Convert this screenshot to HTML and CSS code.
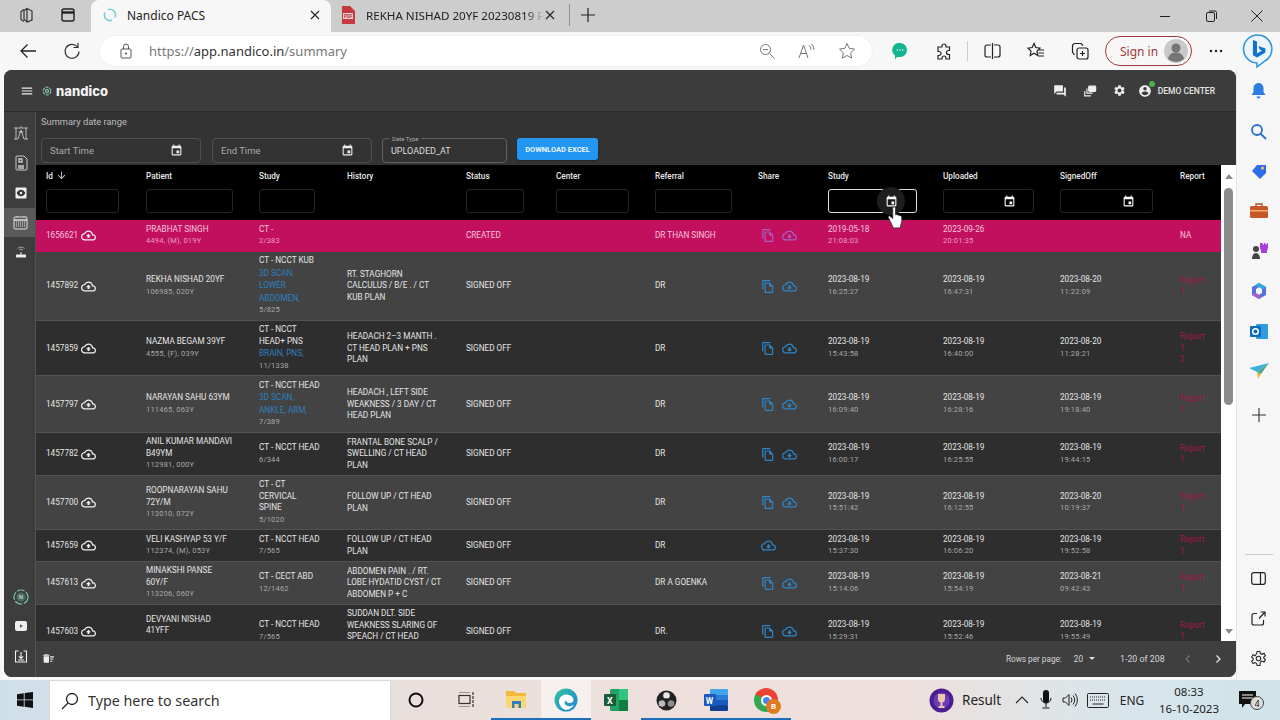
FILE: index.html
```html
<!DOCTYPE html>
<html lang="en">
<head>
    <meta charset="UTF-8">
    <meta name="viewport" content="width=device-width, initial-scale=1.0">
    <title>Nandico PACS</title>
    <link rel="stylesheet" href="styles.css">
</head>
<body>
    <svg class="sprite" aria-hidden="true">
        <symbol id="i-event" viewBox="0 0 24 24"><path d="M17 12h-5v5h5v-5zM16 1v2H8V1H6v2H5c-1.11 0-1.99.9-1.99 2L3 19c0 1.1.89 2 2 2h14c1.1 0 2-.9 2-2V5c0-1.1-.9-2-2-2h-1V1h-2zm3 18H5V8h14v11z"/></symbol>
        <symbol id="i-up" viewBox="0 0 24 24"><path d="M19.35 10.04C18.67 6.59 15.64 4 12 4 9.11 4 6.6 5.64 5.35 8.04 2.34 8.36 0 10.91 0 14c0 3.31 2.69 6 6 6h13c2.76 0 5-2.24 5-5 0-2.64-2.05-4.78-4.65-4.96zM19 18H6c-2.21 0-4-1.79-4-4 0-2.05 1.53-3.76 3.56-3.97l1.07-.11.5-.95C8.08 7.14 9.94 6 12 6c2.62 0 4.88 1.86 5.39 4.43l.3 1.5 1.53.11c1.56.1 2.78 1.41 2.78 2.96 0 1.65-1.35 3-3 3zM8 13h2.55v3h2.9v-3H16l-4-4z"/></symbol>
        <symbol id="i-down" viewBox="0 0 24 24"><path d="M19.35 10.04C18.67 6.59 15.64 4 12 4 9.11 4 6.6 5.64 5.35 8.04 2.34 8.36 0 10.91 0 14c0 3.31 2.69 6 6 6h13c2.76 0 5-2.24 5-5 0-2.64-2.05-4.78-4.65-4.96zM19 18H6c-2.21 0-4-1.79-4-4 0-2.05 1.53-3.76 3.56-3.97l1.07-.11.5-.95C8.08 7.14 9.94 6 12 6c2.62 0 4.88 1.86 5.39 4.43l.3 1.5 1.53.11c1.56.1 2.78 1.41 2.78 2.96 0 1.65-1.35 3-3 3zM13.45 10h-2.9v3H8l4 4 4-4h-2.55z"/></symbol>
        <symbol id="i-copy" viewBox="0 0 24 24"><path d="M16 1H4c-1.1 0-2 .9-2 2v14h2V3h12V1zm-1 4H8c-1.1 0-1.99.9-1.99 2L6 21c0 1.1.89 2 1.99 2H19c1.1 0 2-.9 2-2V11l-6-6zM8 21V7h6v5h5v9H8z"/></symbol>
        <symbol id="i-x" viewBox="0 0 12 12"><path d="M2 2l8 8M10 2l-8 8" fill="none" stroke="currentColor" stroke-width="1.1"/></symbol>
    </svg>

    <div class="tabstrip">
        <div class="strip-btn">
            <svg width="18" height="18" viewBox="0 0 18 18" fill="none" stroke="#333" stroke-width="1.2"><path d="M7 3.5l-3 2v8l3 2M10 2.5l-3 2v9l3 2M10 2.5l5 2.5v9l-5 2z"/></svg>
        </div>
        <div class="strip-btn">
            <svg width="16" height="16" viewBox="0 0 16 16" fill="none" stroke="#222" stroke-width="1.4"><rect x="2" y="2" width="12" height="12" rx="2"/><path d="M2 5.5h12" stroke-width="2.4"/></svg>
        </div>
        <div class="tab tab-active">
            <svg class="tab-icon" width="14" height="16" viewBox="0 0 14 16" fill="none" stroke="#6fd3cf" stroke-width="1.6"><path d="M12 5.5A5.500 5.500 0 0 0 5 2.800M2 10.500a5.500 5.500 0 0 0 7 2.700M2 5.500a6 6 0 0 0 0 5M12 5.500a6 6 0 0 1 0 5"/></svg>
            <span class="tab-title">Nandico PACS</span>
            <svg class="tab-close" width="12" height="12"><use href="#i-x"/></svg>
        </div>
        <div class="tab">
            <svg class="tab-icon" width="16" height="18" viewBox="0 0 16 18"><path d="M2 0h8l5 5v13H2z" fill="#c8383f"/><rect x="3" y="7" width="10" height="6" fill="#f3d7d7"/><text x="4" y="12" font-size="4.6" font-family="Roboto" font-weight="700" fill="#b8272e">PDF</text></svg>
            <span class="tab-title tab-fade">REKHA NISHAD 20YF 20230819 F</span>
            <svg class="tab-close" width="12" height="12"><use href="#i-x"/></svg>
        </div>
        <div class="strip-add">
            <svg width="16" height="16" viewBox="0 0 16 16" stroke="#222" stroke-width="1.2"><path d="M8 1v14M1 8h14"/></svg>
        </div>
        <div class="window-controls">
            <div class="win-btn"><svg width="12" height="12" viewBox="0 0 12 12" stroke="#222"><path d="M1 6.500h10"/></svg></div>
            <div class="win-btn"><svg width="12" height="12" viewBox="0 0 12 12" fill="none" stroke="#222"><rect x="1.500" y="2.500" width="8" height="9" rx="1.500"/><path d="M4 1h6a1.500 1.500 0 0 1 1.500 1.500V9"/></svg></div>
            <div class="win-btn"><svg width="14" height="14" viewBox="0 0 14 14" stroke="#222"><path d="M1.500 1.500l11 11M12.500 1.500l-11 11"/></svg></div>
        </div>
    </div>

    <div class="toolbar">
        <div class="tool-btn">
            <svg width="18" height="18" viewBox="0 0 18 18" fill="none" stroke="#222" stroke-width="1.3"><path d="M17 9H2M8.500 2.500L2 9l6.500 6.500"/></svg>
        </div>
        <div class="tool-btn">
            <svg width="18" height="18" viewBox="0 0 18 18" fill="none" stroke="#333" stroke-width="1.2"><path d="M14.500 5A7 7 0 1 0 16 9.500M15 1v4.500h-4.500"/></svg>
        </div>
        <div class="urlbox">
            <svg class="lock" width="14" height="16" viewBox="0 0 14 16" fill="none" stroke="#555"><rect x="2" y="6" width="10" height="9" rx="1"/><path d="M4.500 6V3.500a2.500 2.500 0 0 1 5 0V6"/><circle cx="7" cy="10.500" r=".7" fill="#555"/></svg>
            <span class="url"><span class="url-dim">https://</span>app.nandico.in<span class="url-dim">/summary</span></span>
            <div class="url-btn"><svg width="16" height="16" viewBox="0 0 16 16" fill="none" stroke="#777"><circle cx="6.500" cy="6.500" r="5"/><path d="M10.500 10.500l5 5M4 6.500h5"/></svg></div>
            <div class="url-btn"><svg width="18" height="16" viewBox="0 0 18 16" fill="none" stroke="#777"><path d="M1 15L5.500 2 10 15M2.800 10.500h5.500M11 2.500a5 5 0 0 1 2 4M13.500 1a7 7 0 0 1 2.500 6"/></svg></div>
            <div class="url-btn"><svg width="18" height="18" viewBox="0 0 18 18" fill="none" stroke="#777"><path d="M9 1.500l2.300 4.900 5.200.7-3.800 3.700.9 5.300L9 13.500l-4.600 2.600.9-5.300L1.500 7.100l5.200-.7z"/></svg></div>
        </div>
        <div class="tool-btn tool-gap">
            <svg width="16" height="18" viewBox="0 0 16 18"><path d="M8 1a7 7 0 0 1 0 14H5l-2 2.500V13.500A7 7 0 0 1 8 1z" fill="#12b48f"/><circle cx="5.200" cy="8" r=".7" fill="#fff"/><circle cx="8" cy="8" r=".7" fill="#fff"/><circle cx="10.800" cy="8" r=".7" fill="#fff"/></svg>
        </div>
        <div class="tool-btn">
            <svg width="17" height="17" viewBox="0 0 17 17" fill="none" stroke="#222" stroke-width="1.2"><path d="M6 3a2 2 0 0 1 4 0v1h3.500v3.500h-1a2 2 0 0 0 0 4h1V16H10v-1a2 2 0 0 0-4 0v1H2v-3.500h1a2 2 0 0 0 0-4H2V4h4z"/></svg>
        </div>
        <div class="tool-sep"></div>
        <div class="tool-btn">
            <svg width="17" height="16" viewBox="0 0 17 16" fill="none" stroke="#222" stroke-width="1.2"><path d="M8.500 0v16M7 2H3a2 2 0 0 0-2 2v8a2 2 0 0 0 2 2h4M10 2h4a2 2 0 0 1 2 2v8a2 2 0 0 1-2 2h-4"/></svg>
        </div>
        <div class="tool-btn">
            <svg width="18" height="18" viewBox="0 0 18 18" fill="none" stroke="#222" stroke-width="1.2"><path d="M7 1.500l1.800 4 4.200.6-3 3 .8 4.400L7 11.300l-3.800 2.200.8-4.400-3-3 4.200-.6zM12 8h5M11.500 11h5.500M10.500 14h6.500"/></svg>
        </div>
        <div class="tool-btn">
            <svg width="18" height="18" viewBox="0 0 18 18" fill="none" stroke="#222" stroke-width="1.2"><rect x="6" y="6" width="11" height="11" rx="2"/><path d="M11.500 9v5M9 11.500h5M12 3.500L10 1.500H4a2.500 2.500 0 0 0-2.500 2.500v6L3.500 13"/></svg>
        </div>
        <div class="signin">
            <span>Sign in</span>
            <svg width="24" height="24" viewBox="0 0 24 24"><circle cx="12" cy="12" r="12" fill="#c9c9c9"/><circle cx="12" cy="9" r="4.500" fill="#757575"/><path d="M4 20c1-5 4-6.500 8-6.500s7 1.500 8 6.500a12 12 0 0 1-16 0z" fill="#757575"/></svg>
        </div>
        <div class="tool-btn tool-more">
            <svg width="14" height="4" viewBox="0 0 14 4" fill="#222"><circle cx="2" cy="2" r="1.200"/><circle cx="7" cy="2" r="1.200"/><circle cx="12" cy="2" r="1.200"/></svg>
        </div>
        <div class="tool-bing">
            <svg width="32" height="36" viewBox="0 0 32 36"><path d="M16 2a14 14 0 0 1 6 26.600L15 34v-4A14 14 0 0 1 16 2z" fill="#eaf5fd" stroke="#2e93d8" stroke-width="1.500"/><path d="M11 7l4 1.500v12l5-3-2.300-1-1.300-3.500 7 2.500v4l-8.500 5-4-2.300z" fill="#1172c9"/></svg>
        </div>
    </div>

    <div class="content">
        <div class="app">
            <header class="appbar">
                <svg class="menu-icon" width="14" height="14" viewBox="0 0 24 24" fill="#eee"><path d="M3 18h18v-2H3v2zm0-5h18v-2H3v2zm0-7v2h18V6H3z"/></svg>
                <svg width="10" height="10" viewBox="0 0 10 10" fill="none" stroke="#7fb5a6" stroke-width="1.300"><circle cx="5" cy="5" r="3.800" stroke-dasharray="3 1"/><circle cx="5" cy="5" r="1.500"/></svg>
                <span class="brand">nandico</span>
                <div class="appbar-right">
                    <svg class="bar-icon" width="14" height="14" viewBox="0 0 24 24" fill="#eee"><path d="M21 6h-2v9H6v2c0 .55.45 1 1 1h11l4 4V7c0-.55-.45-1-1-1zm-4 6V3c0-.55-.45-1-1-1H3c-.55 0-1 .45-1 1v14l4-4h10c.55 0 1-.45 1-1z"/></svg>
                    <svg class="bar-icon" width="14" height="14" viewBox="0 0 16 16" fill="none" stroke="#eee" stroke-width="1.300"><rect x="6.500" y="2.500" width="8" height="6" rx="1" fill="#eee"/><path d="M4.500 5v5.500H11M2 8v5.500h7"/></svg>
                    <svg class="bar-icon" width="13" height="13" viewBox="0 0 24 24" fill="#eee"><path d="M19.14 12.94c.04-.3.06-.61.06-.94 0-.32-.02-.64-.07-.94l2.03-1.58c.18-.14.23-.41.12-.61l-1.92-3.32c-.12-.22-.37-.29-.59-.22l-2.39.96c-.5-.38-1.03-.7-1.62-.94l-.36-2.54c-.04-.24-.24-.41-.48-.41h-3.84c-.24 0-.43.17-.47.41l-.36 2.54c-.59.24-1.13.57-1.62.94l-2.39-.96c-.22-.08-.47 0-.59.22L2.74 8.870c-.12.21-.08.47.12.61l2.03 1.58c-.05.3-.09.63-.09.94s.02.64.07.94l-2.03 1.58c-.18.14-.23.41-.12.61l1.92 3.32c.12.22.37.29.59.22l2.39-.96c.5.38 1.03.7 1.62.94l.36 2.54c.05.24.24.41.48.41h3.840c.24 0 .44-.17.47-.41l.36-2.54c.59-.24 1.13-.56 1.62-.94l2.39.96c.22.08.47 0 .59-.22l1.92-3.32c.12-.22.07-.47-.12-.61l-2.01-1.58zM12 15.600c-1.98 0-3.6-1.62-3.6-3.6s1.62-3.6 3.6-3.6 3.6 1.62 3.6 3.6-1.62 3.6-3.6 3.6z"/></svg>
                    <span class="account">
                        <svg width="14" height="14" viewBox="0 0 24 24" fill="#eee"><path d="M12 2C6.480 2 2 6.480 2 12s4.480 10 10 10 10-4.480 10-10S17.520 2 12 2zm0 3c1.660 0 3 1.340 3 3s-1.340 3-3 3-3-1.340-3-3 1.340-3 3-3zm0 14.200c-2.500 0-4.710-1.280-6-3.220.03-1.990 4-3.080 6-3.080 1.990 0 5.970 1.090 6 3.080-1.290 1.940-3.500 3.220-6 3.220z"/></svg>
                        <span class="online-dot"></span>
                    </span>
                    <span class="center-name">DEMO CENTER</span>
                </div>
            </header>

            <div class="app-body">
                <nav class="sidenav">
                    <div class="nav-group">
                        <div class="nav-item">
                            <svg width="16" height="16" viewBox="0 0 16 16" fill="none" stroke="#bbb"><path d="M1 3h14M3 3v11M13 3v11M5 14l3-9 3 9M5.500 7h5M8 1v2M1 14h4M11 14h4"/></svg>
                        </div>
                        <div class="nav-item">
                            <svg width="14" height="16" viewBox="0 0 14 16" fill="none" stroke="#ccc"><path d="M3 1h7l3 3v10a1 1 0 0 1-1 1H3a1 1 0 0 1-1-1V2a1 1 0 0 1 1-1z"/><path d="M4 11h6M4 13h6M5 4h3v3H5z" stroke-width="1.300"/></svg>
                        </div>
                        <div class="nav-item">
                            <svg width="12" height="12" viewBox="0 0 24 24"><rect x="1" y="1" width="22" height="22" rx="2" fill="#eee"/><path d="M12 5l2 1.500 2.500-.5 1 2.500L20 10v4l-2.500 1.500-1 2.500-2.500-.5L12 19l-2-1.500-2.500.5-1-2.500L4 14v-4l2.500-1.500 1-2.500 2.500.5z" fill="#333"/><circle cx="12" cy="12" r="2.500" fill="#eee"/></svg>
                        </div>
                        <div class="nav-item nav-active">
                            <svg width="15" height="15" viewBox="0 0 15 15" fill="none" stroke="#e0e0e0"><rect x="1" y="2" width="13" height="12" rx="1"/><path d="M1 5h13" stroke-width="1.500"/><path d="M4 1v2M11 1v2M3 7h9M3 9h9M3 11h9" stroke-dasharray="1 1"/></svg>
                        </div>
                        <div class="nav-item">
                            <svg width="12" height="14" viewBox="0 0 12 14"><path d="M6 7v3" stroke="#eee"/><path d="M4 5a3 3 0 0 1 4 0M2.500 3.500a5 5 0 0 1 7 0" fill="none" stroke="#ccc" stroke-width=".7"/><rect x="1" y="9.500" width="10" height="3" rx=".7" fill="#eee"/></svg>
                        </div>
                    </div>
                    <div class="nav-group">
                        <div class="nav-item">
                            <svg width="16" height="16" viewBox="0 0 16 16" fill="none"><circle cx="8" cy="8" r="7" stroke="#7fc3ab" stroke-width="1.200" stroke-dasharray="8 1.500"/><circle cx="8" cy="8" r="4.500" fill="#4d6d63"/><text x="5.800" y="10" font-size="6" font-family="Roboto" fill="#d5e8e1">N</text></svg>
                        </div>
                        <div class="nav-item">
                            <svg width="12" height="10" viewBox="0 0 12 10"><rect width="12" height="10" rx="2" fill="#eee"/><path d="M5 3.200v3.600L8 5z" fill="#555"/></svg>
                        </div>
                        <div class="nav-item">
                            <svg width="14" height="13" viewBox="0 0 14 13" fill="none" stroke="#eee" stroke-width="1.100"><path d="M4.500 1H1.500v11h11V1h-3"/><path d="M7 2v6.500M4.800 6.300L7 8.500l2.200-2.200M4 10h6"/></svg>
                        </div>
                    </div>
                </nav>

                <main class="main">
                    <section class="filterbar">
                        <div class="filter-title">Summary date range</div>
                        <div class="filter-row">
                            <div class="date-field">
                                <span>Start Time</span>
                                <svg width="13" height="13" fill="#eee"><use href="#i-event"/></svg>
                            </div>
                            <div class="date-field">
                                <span>End Time</span>
                                <svg width="13" height="13" fill="#eee"><use href="#i-event"/></svg>
                            </div>
                            <div class="select-field">
                                <span class="select-legend">Date Type</span>
                                <span>UPLOADED_AT</span>
                            </div>
                            <button class="excel-btn">DOWNLOAD EXCEL</button>
                        </div>
                    </section>

                    <div class="table-wrap">
                        <div class="table">
                            <div class="thead">
                                <div class="th">
                                    <span class="th-label">Id <svg width="11" height="11" viewBox="0 0 24 24" fill="#ccc"><path d="M20 12l-1.410-1.410L13 16.170V4h-2v12.170l-5.580-5.590L4 12l8 8 8-8z"/></svg></span>
                                    <div class="th-input w73"></div>
                                </div>
                                <div class="th"><span class="th-label">Patient</span><div class="th-input w87"></div></div>
                                <div class="th"><span class="th-label">Study</span><div class="th-input w56"></div></div>
                                <div class="th"><span class="th-label">History</span></div>
                                <div class="th"><span class="th-label">Status</span><div class="th-input w58"></div></div>
                                <div class="th"><span class="th-label">Center</span><div class="th-input w73"></div></div>
                                <div class="th"><span class="th-label">Referral</span><div class="th-input w77"></div></div>
                                <div class="th"><span class="th-label">Share</span></div>
                                <div class="th">
                                    <span class="th-label">Study</span>
                                    <div class="th-input w89 th-date th-focus"><span class="icon-halo"><svg width="13" height="13" fill="#fff"><use href="#i-event"/></svg></span></div>
                                </div>
                                <div class="th">
                                    <span class="th-label">Uploaded</span>
                                    <div class="th-input w91 th-date"><svg width="13" height="13" fill="#fff"><use href="#i-event"/></svg></div>
                                </div>
                                <div class="th">
                                    <span class="th-label">SignedOff</span>
                                    <div class="th-input w93 th-date"><svg width="13" height="13" fill="#fff"><use href="#i-event"/></svg></div>
                                </div>
                                <div class="th"><span class="th-label">Report</span></div>
                            </div>

                            <div class="tbody">
                                <div class="row row-flag">
                                    <div class="cell cell-id">1656621 <svg width="15" height="15"><use href="#i-up"/></svg></div>
                                    <div class="cell cell-patient"><div>PRABHAT SINGH</div><div class="sub">4494, (M), 019Y</div></div>
                                    <div class="cell cell-study"><div>CT -</div><div class="sub">2/383</div></div>
                                    <div class="cell cell-history"></div>
                                    <div class="cell">CREATED</div>
                                    <div class="cell"></div>
                                    <div class="cell">DR THAN SINGH</div>
                                    <div class="cell cell-share"><svg width="14" height="15"><use href="#i-copy"/></svg><svg width="15" height="15"><use href="#i-down"/></svg></div>
                                    <div class="cell"><div>2019-05-18</div><div class="sub">21:08:03</div></div>
                                    <div class="cell"><div>2023-09-26</div><div class="sub">20:01:35</div></div>
                                    <div class="cell"></div>
                                    <div class="cell">NA</div>
                                </div>

                                <div class="row">
                                    <div class="cell cell-id">1457892 <svg width="15" height="15"><use href="#i-up"/></svg></div>
                                    <div class="cell cell-patient"><div>REKHA NISHAD 20YF</div><div class="sub">106985, 020Y</div></div>
                                    <div class="cell cell-study"><div>CT - NCCT KUB</div><div class="tags">3D SCAN,</div><div class="tags">LOWER</div><div class="tags">ABDOMEN,</div><div class="sub">5/825</div></div>
                                    <div class="cell cell-history">RT. STAGHORN CALCULUS / B/E . / CT KUB PLAN</div>
                                    <div class="cell">SIGNED OFF</div>
                                    <div class="cell"></div>
                                    <div class="cell">DR</div>
                                    <div class="cell cell-share"><svg width="14" height="15"><use href="#i-copy"/></svg><svg width="15" height="15"><use href="#i-down"/></svg></div>
                                    <div class="cell"><div>2023-08-19</div><div class="sub">16:25:27</div></div>
                                    <div class="cell"><div>2023-08-19</div><div class="sub">16:47:31</div></div>
                                    <div class="cell"><div>2023-08-20</div><div class="sub">11:22:09</div></div>
                                    <div class="cell cell-report"><div>Report</div><div>1</div></div>
                                </div>

                                <div class="row">
                                    <div class="cell cell-id">1457859 <svg width="15" height="15"><use href="#i-up"/></svg></div>
                                    <div class="cell cell-patient"><div>NAZMA BEGAM 39YF</div><div class="sub">4555, (F), 039Y</div></div>
                                    <div class="cell cell-study"><div>CT - NCCT<br>HEAD+ PNS</div><div class="tags">BRAIN, PNS,</div><div class="sub">11/1338</div></div>
                                    <div class="cell cell-history">HEADACH 2&ndash;3 MANTH . CT HEAD PLAN + PNS PLAN</div>
                                    <div class="cell">SIGNED OFF</div>
                                    <div class="cell"></div>
                                    <div class="cell">DR</div>
                                    <div class="cell cell-share"><svg width="14" height="15"><use href="#i-copy"/></svg><svg width="15" height="15"><use href="#i-down"/></svg></div>
                                    <div class="cell"><div>2023-08-19</div><div class="sub">15:43:58</div></div>
                                    <div class="cell"><div>2023-08-19</div><div class="sub">16:40:00</div></div>
                                    <div class="cell"><div>2023-08-20</div><div class="sub">11:28:21</div></div>
                                    <div class="cell cell-report"><div>Report</div><div>1</div><div>2</div></div>
                                </div>

                                <div class="row">
                                    <div class="cell cell-id">1457797 <svg width="15" height="15"><use href="#i-up"/></svg></div>
                                    <div class="cell cell-patient"><div>NARAYAN SAHU 63YM</div><div class="sub">111465, 063Y</div></div>
                                    <div class="cell cell-study"><div>CT - NCCT HEAD</div><div class="tags">3D SCAN,</div><div class="tags">ANKLE, ARM,</div><div class="sub">7/389</div></div>
                                    <div class="cell cell-history">HEADACH , LEFT SIDE WEAKNESS / 3 DAY / CT HEAD PLAN</div>
                                    <div class="cell">SIGNED OFF</div>
                                    <div class="cell"></div>
                                    <div class="cell">DR</div>
                                    <div class="cell cell-share"><svg width="14" height="15"><use href="#i-copy"/></svg><svg width="15" height="15"><use href="#i-down"/></svg></div>
                                    <div class="cell"><div>2023-08-19</div><div class="sub">16:09:40</div></div>
                                    <div class="cell"><div>2023-08-19</div><div class="sub">16:28:16</div></div>
                                    <div class="cell"><div>2023-08-19</div><div class="sub">19:18:40</div></div>
                                    <div class="cell cell-report"><div>Report</div><div>1</div></div>
                                </div>

                                <div class="row">
                                    <div class="cell cell-id">1457782 <svg width="15" height="15"><use href="#i-up"/></svg></div>
                                    <div class="cell cell-patient"><div>ANIL KUMAR MANDAVI B49YM</div><div class="sub">112981, 000Y</div></div>
                                    <div class="cell cell-study"><div>CT - NCCT HEAD</div><div class="sub">6/344</div></div>
                                    <div class="cell cell-history">FRANTAL BONE SCALP / SWELLING / CT HEAD PLAN</div>
                                    <div class="cell">SIGNED OFF</div>
                                    <div class="cell"></div>
                                    <div class="cell">DR</div>
                                    <div class="cell cell-share"><svg width="14" height="15"><use href="#i-copy"/></svg><svg width="15" height="15"><use href="#i-down"/></svg></div>
                                    <div class="cell"><div>2023-08-19</div><div class="sub">16:00:17</div></div>
                                    <div class="cell"><div>2023-08-19</div><div class="sub">16:25:55</div></div>
                                    <div class="cell"><div>2023-08-19</div><div class="sub">19:44:15</div></div>
                                    <div class="cell cell-report"><div>Report</div><div>1</div></div>
                                </div>

                                <div class="row">
                                    <div class="cell cell-id">1457700 <svg width="15" height="15"><use href="#i-up"/></svg></div>
                                    <div class="cell cell-patient"><div>ROOPNARAYAN SAHU 72Y/M</div><div class="sub">113010, 072Y</div></div>
                                    <div class="cell cell-study"><div>CT - CT<br>CERVICAL<br>SPINE</div><div class="sub">5/1020</div></div>
                                    <div class="cell cell-history">FOLLOW UP / CT HEAD PLAN</div>
                                    <div class="cell">SIGNED OFF</div>
                                    <div class="cell"></div>
                                    <div class="cell">DR</div>
                                    <div class="cell cell-share"><svg width="14" height="15"><use href="#i-copy"/></svg><svg width="15" height="15"><use href="#i-down"/></svg></div>
                                    <div class="cell"><div>2023-08-19</div><div class="sub">15:51:42</div></div>
                                    <div class="cell"><div>2023-08-19</div><div class="sub">16:12:55</div></div>
                                    <div class="cell"><div>2023-08-20</div><div class="sub">10:19:37</div></div>
                                    <div class="cell cell-report"><div>Report</div><div>1</div></div>
                                </div>

                                <div class="row">
                                    <div class="cell cell-id">1457659 <svg width="15" height="15"><use href="#i-up"/></svg></div>
                                    <div class="cell cell-patient"><div>VELI KASHYAP 53 Y/F</div><div class="sub">112374, (M), 053Y</div></div>
                                    <div class="cell cell-study"><div>CT - NCCT HEAD</div><div class="sub">7/565</div></div>
                                    <div class="cell cell-history">FOLLOW UP / CT HEAD PLAN</div>
                                    <div class="cell">SIGNED OFF</div>
                                    <div class="cell"></div>
                                    <div class="cell">DR</div>
                                    <div class="cell cell-share"><svg width="15" height="15"><use href="#i-down"/></svg></div>
                                    <div class="cell"><div>2023-08-19</div><div class="sub">15:37:30</div></div>
                                    <div class="cell"><div>2023-08-19</div><div class="sub">16:06:20</div></div>
                                    <div class="cell"><div>2023-08-19</div><div class="sub">19:52:58</div></div>
                                    <div class="cell cell-report"><div>Report</div><div>1</div></div>
                                </div>

                                <div class="row">
                                    <div class="cell cell-id">1457613 <svg width="15" height="15"><use href="#i-up"/></svg></div>
                                    <div class="cell cell-patient"><div>MINAKSHI PANSE 60Y/F</div><div class="sub">113206, 060Y</div></div>
                                    <div class="cell cell-study"><div>CT - CECT ABD</div><div class="sub">12/1462</div></div>
                                    <div class="cell cell-history">ABDOMEN PAIN . / RT. LOBE HYDATID CYST / CT ABDOMEN P + C</div>
                                    <div class="cell">SIGNED OFF</div>
                                    <div class="cell"></div>
                                    <div class="cell">DR A GOENKA</div>
                                    <div class="cell cell-share"><svg width="14" height="15"><use href="#i-copy"/></svg><svg width="15" height="15"><use href="#i-down"/></svg></div>
                                    <div class="cell"><div>2023-08-19</div><div class="sub">15:14:06</div></div>
                                    <div class="cell"><div>2023-08-19</div><div class="sub">15:54:19</div></div>
                                    <div class="cell"><div>2023-08-21</div><div class="sub">09:42:43</div></div>
                                    <div class="cell cell-report"><div>Report</div><div>1</div></div>
                                </div>

                                <div class="row">
                                    <div class="cell cell-id">1457603 <svg width="15" height="15"><use href="#i-up"/></svg></div>
                                    <div class="cell cell-patient"><div>DEVYANI NISHAD 41YFF</div><div class="sub">&nbsp;</div></div>
                                    <div class="cell cell-study"><div>CT - NCCT HEAD</div><div class="sub">7/565</div></div>
                                    <div class="cell cell-history">SUDDAN DLT. SIDE WEAKNESS SLARING OF SPEACH / CT HEAD PLAN</div>
                                    <div class="cell">SIGNED OFF</div>
                                    <div class="cell"></div>
                                    <div class="cell">DR.</div>
                                    <div class="cell cell-share"><svg width="14" height="15"><use href="#i-copy"/></svg><svg width="15" height="15"><use href="#i-down"/></svg></div>
                                    <div class="cell"><div>2023-08-19</div><div class="sub">15:29:31</div></div>
                                    <div class="cell"><div>2023-08-19</div><div class="sub">15:52:46</div></div>
                                    <div class="cell"><div>2023-08-19</div><div class="sub">19:55:49</div></div>
                                    <div class="cell cell-report"><div>Report</div><div>1</div></div>
                                </div>
                            </div>
                        </div>

                        <div class="scrollbar">
                            <span class="scroll-up"></span>
                            <span class="scroll-thumb"></span>
                            <span class="scroll-down"></span>
                        </div>
                    </div>

                    <footer class="pager">
                        <svg class="sweep" width="13" height="13" viewBox="0 0 24 24" fill="#eee"><path d="M15 16h4v2h-4zm0-8h7v2h-7zm0 4h6v2h-6zM3 18c0 1.100.9 2 2 2h6c1.100 0 2-.9 2-2V8H3v10zM14 5h-3l-1-1H6L5 5H2v2h12z"/></svg>
                        <span class="pager-label">Rows per page:</span>
                        <span class="pager-size">20</span>
                        <span class="pager-caret"></span>
                        <span class="pager-range">1-20 of 208</span>
                        <svg class="pager-prev" width="8" height="10" viewBox="0 0 8 10" fill="none" stroke="#777" stroke-width="1.100"><path d="M5.500 1.500L2 5l3.500 3.500"/></svg>
                        <svg class="pager-next" width="8" height="10" viewBox="0 0 8 10" fill="none" stroke="#eee" stroke-width="1.200"><path d="M2.500 1.500L6 5 2.500 8.500"/></svg>
                    </footer>
                </main>
            </div>

            <svg class="hand-cursor" width="18" height="23" viewBox="0 0 16 21"><path d="M5 2a1.300 1.300 0 0 1 2.600 0v6l.6-.2 1 .1.5.5.9-.1.7.6 1-.1.900 1 .2 4-1 3.500-.5 2.700H5.500l-1-2.500L1 10.500c-.5-.9.5-1.800 1.300-1.300L5 11.500z" fill="#fff" stroke="#222" stroke-width=".7"/></svg>
        </div>

        <aside class="edge-rail">
            <div class="rail-group">
                <div class="rail-item"><svg width="17" height="18" viewBox="0 0 17 18" fill="#2b7de0"><path d="M8.500 1a5 5 0 0 1 5 5v4l2 3H1.500l2-3V6a5 5 0 0 1 5-5zM6.500 14.500h4a2 2 0 0 1-4 0z"/></svg></div>
                <div class="rail-item"><svg width="17" height="17" viewBox="0 0 17 17" fill="none" stroke="#2a6fd0" stroke-width="1.800"><circle cx="7" cy="7" r="5"/><path d="M11 11l5 5"/></svg></div>
                <div class="rail-item"><svg width="18" height="18" viewBox="0 0 18 18"><path d="M7 3h9v8l-6 6-8-8z" fill="#2d6ee8"/><circle cx="12.500" cy="6" r="1.500" fill="#f3c84a"/></svg></div>
                <div class="rail-item"><svg width="18" height="16" viewBox="0 0 18 16"><path d="M6 3V1h6v2" fill="none" stroke="#a8532a" stroke-width="1.300"/><rect y="3" width="18" height="12" rx="1.500" fill="#c9562a"/><rect y="7" width="18" height="1.500" fill="#f0b06a"/></svg></div>
                <div class="rail-item"><svg width="20" height="20" viewBox="0 0 20 20"><circle cx="7" cy="8" r="3" fill="#444"/><path d="M3 18c0-4 2-6 4-6s4 2 4 6z" fill="#444"/><path d="M12 2h1.500v1.500H15V2h1.500v1.500H18V2h1v5l-1 3v2h-6v-2l-1-3V2z" fill="#a93ddb"/></svg></div>
                <div class="rail-item"><svg width="18" height="18" viewBox="0 0 18 18"><path d="M9 1l7 4v8l-7 4-7-4V5z" fill="#5a6fd8"/><path d="M9 1l7 4-4 2.300L5 3.200z" fill="#2fa8e0"/><path d="M2 13l4-2.300 6 3.700-3 2.600z" fill="#a45fcf"/><path d="M6 7l3-1.700L12 7v4l-3 1.700L6 11z" fill="#f5f5f5"/></svg></div>
                <div class="rail-item"><svg width="18" height="17" viewBox="0 0 18 17"><rect x="6" y="1" width="12" height="15" rx="1" fill="#2e9de0"/><rect y="3" width="11" height="11" rx="1" fill="#0f6cbd"/><circle cx="5.500" cy="8.500" r="2.800" fill="none" stroke="#fff" stroke-width="1.500"/></svg></div>
                <div class="rail-item"><svg width="20" height="16" viewBox="0 0 20 16"><path d="M0 5L20 0 8 9z" fill="#3bb2dd"/><path d="M0 5l8 4 1 7 3-5z" fill="#e8b43a"/><path d="M20 0L12 11 8 9z" fill="#4aa887"/></svg></div>
                <div class="rail-item rail-plus"><svg width="14" height="14" viewBox="0 0 14 14" stroke="#333" stroke-width="1.100"><path d="M7 0v14M0 7h14"/></svg></div>
            </div>
            <div class="rail-group">
                <div class="rail-sep"></div>
                <div class="rail-item"><svg width="15" height="13" viewBox="0 0 15 13" fill="none" stroke="#222" stroke-width="1.200"><rect x=".7" y=".7" width="13.600" height="11.600" rx="2"/><path d="M9.500 .7v11.600"/></svg></div>
                <div class="rail-item"><svg width="15" height="15" viewBox="0 0 15 15" fill="none" stroke="#222" stroke-width="1.200"><path d="M6 2.500H3a2 2 0 0 0-2 2V12a2 2 0 0 0 2 2h7.500a2 2 0 0 0 2-2V9M8 7.500L14 1M9.500 1H14v4.500"/></svg></div>
                <div class="rail-item"><svg width="17" height="17" viewBox="0 0 24 24" fill="none" stroke="#222" stroke-width="1.500"><circle cx="12" cy="12" r="3.200"/><path d="M10 2h4l.6 3 2.400 1.100 2.700-1.500 2 3.400-2.300 2 .1 1.500 2.200 2-2 3.400-2.800-1.300-2.300 1.300L14 22h-4l-.6-2.900-2.400-1.300-2.700 1.300-2-3.400 2.200-2V12l-2.200-2 2-3.400 2.700 1.500L9.400 5z"/></svg></div>
            </div>
        </aside>
    </div>

    <div class="taskbar">
        <div class="task-start">
            <svg width="16" height="16" viewBox="0 0 16 16" fill="#111"><path d="M0 2.200l6.800-1v6.300H0zM7.600 1.100L16 0v7.500H7.600zM0 8.300h6.800v6.500L0 13.800zM7.600 8.300H16V16l-8.400-1.200z"/></svg>
        </div>
        <div class="task-search">
            <svg width="18" height="18" viewBox="0 0 18 18" fill="none" stroke="#222" stroke-width="1.300"><circle cx="11" cy="7" r="5.500"/><path d="M7 11l-6 6"/></svg>
            <span>Type here to search</span>
        </div>
        <div class="task-item"><svg width="16" height="16" viewBox="0 0 16 16" fill="none" stroke="#111" stroke-width="2"><circle cx="8" cy="8" r="6.500"/></svg></div>
        <div class="task-item task-view"><svg width="18" height="18" viewBox="0 0 18 18" fill="none" stroke="#333" stroke-width="1.200"><rect x="3" y="4.500" width="11" height="8"/><path d="M3 1.500h11M3 15.500h11" stroke="#999"/><path d="M17 1v16" stroke-dasharray="3 1"/></svg></div>
        <div class="task-item task-open"><svg width="22" height="20" viewBox="0 0 22 20"><path d="M1 1h8l2 2h10v15H1z" fill="#f2b93b"/><path d="M1 6h20v12H1z" fill="#fbd774"/><rect x="7" y="11" width="9" height="7" fill="#2d7fc1"/><rect x="9.500" y="14" width="4" height="4" fill="#fbd774"/></svg></div>
        <div class="task-item task-open task-focus">
            <svg width="24" height="24" viewBox="0 0 24 24"><defs><linearGradient id="edge-a" x1="0" y1="0" x2="1" y2="1"><stop offset="0" stop-color="#36c5a0"/><stop offset="1" stop-color="#1c7fd6"/></linearGradient></defs><circle cx="12" cy="12" r="11.500" fill="url(#edge-a)"/><path d="M6 17c-3-5 1-11 7-10.500 4 .3 6.500 3 6.500 6 0 1.500-1.500 2.500-4 2.500s-3.500-1-3-2.500c-2 0-3 3 0 5 2 1.300 5 1 7.500-1-1.500 4-6 6-9.500 5-2-.6-3.700-2.300-4.500-4.500z" fill="#fff"/></svg>
        </div>
        <div class="task-item"><svg width="24" height="22" viewBox="0 0 24 22"><rect x="6" y="0" width="18" height="22" rx="1.500" fill="#21a366"/><rect x="15" y="0" width="9" height="11" fill="#33c481"/><rect x="15" y="11" width="9" height="11" fill="#107c41"/><rect y="5" width="12" height="12" rx="1" fill="#185c37"/><text x="3" y="14.500" font-size="9" font-weight="700" font-family="Roboto" fill="#fff">X</text></svg></div>
        <div class="task-item task-open"><svg width="21" height="21" viewBox="0 0 21 21"><circle cx="10.500" cy="10.500" r="10" fill="#222"/><circle cx="10.500" cy="5.500" r="3.300" fill="#e8e8e8"/><circle cx="6" cy="13.500" r="3.300" fill="#bdbdbd"/><circle cx="15" cy="13.500" r="3.300" fill="#8d8d8d"/><circle cx="10.500" cy="10.500" r="2.200" fill="#222"/></svg></div>
        <div class="task-item task-open"><svg width="24" height="22" viewBox="0 0 24 22"><rect x="6" width="18" height="6" rx="1" fill="#41a5ee"/><rect x="6" y="6" width="18" height="5" fill="#2b7cd3"/><rect x="6" y="11" width="18" height="5" fill="#185abd"/><rect x="6" y="16" width="18" height="6" rx="1" fill="#103f91"/><rect y="5" width="12" height="12" rx="1" fill="#185abd"/><text x="1.800" y="14.500" font-size="8.500" font-weight="700" font-family="Roboto" fill="#fff">W</text></svg></div>
        <div class="task-item task-open">
            <span class="chrome-logo"><span class="chrome-core"></span><span class="chrome-badge">B</span></span>
        </div>

        <div class="tray">
            <span class="tray-result">
                <svg width="25" height="25" viewBox="0 0 25 25"><circle cx="12.500" cy="12.500" r="12" fill="#4b1f8f"/><circle cx="12.500" cy="12.500" r="8" fill="#6d3bb5"/><path d="M9 6h7v5a3.500 3.500 0 0 1-7 0zM11.500 14h2v4h2v2h-6v-2h2z" fill="#e8c9b0"/></svg>
                <span>Result</span>
            </span>
            <span class="tray-icon"><svg width="14" height="8" viewBox="0 0 14 8" fill="none" stroke="#222" stroke-width="1.100"><path d="M1 7l6-6 6 6"/></svg></span>
            <span class="tray-icon"><svg width="12" height="20" viewBox="0 0 12 20"><rect x="3" y="0" width="6" height="13" rx="3" fill="#111"/><path d="M1 8a5 5 0 0 0 10 0M6 13v4M2.500 18h7" fill="none" stroke="#111"/></svg></span>
            <span class="tray-icon"><svg width="16" height="16" viewBox="0 0 16 16" fill="none" stroke="#222"><path d="M1 6h2.500L7 2.500v11L3.500 10H1zM9 5.500a4 4 0 0 1 0 5M11 3.500a7 7 0 0 1 0 9M13 1.500a10 10 0 0 1 0 13"/></svg></span>
            <span class="tray-icon tray-keys"><svg width="22" height="15" viewBox="0 0 22 15" fill="none" stroke="#222"><rect x=".5" y=".5" width="21" height="14" rx="1"/><path d="M3 4h16M3 7h16" stroke-dasharray="1 1"/><path d="M5.500 11h11"/></svg></span>
            <span class="tray-lang">ENG</span>
            <span class="tray-clock"><span>08:33</span><span>16-10-2023</span></span>
            <span class="tray-notify">
                <svg width="19" height="20" viewBox="0 0 19 20"><path d="M1 1h17v13H7l-3 4v-4H1z" fill="#111"/><path d="M4 5h11M4 8h11" stroke="#fff"/></svg>
                <span class="notify-count">4</span>
            </span>
        </div>
    </div>
</body>
</html>
```

FILE: styles.css
```css
* {
    box-sizing: border-box;
}
html, body {
    margin: 0;
    height: 100%;
}
body {
    width: 1280px;
    height: 720px;
    overflow: hidden;
    display: flex;
    flex-direction: column;
    font-family: "Noto Sans", sans-serif;
    background-color: #f7f7f7;
}
.sprite {
    display: none;
}

/* browser tabs */
.tabstrip {
    height: 32px;
    flex: none;
    display: flex;
    padding-left: 5px;
    background-color: #cdcdcd;
    color: #222;
    font-size: 12px;
}
.strip-btn {
    width: 42px;
    padding-bottom: 2px;
    display: flex;
    align-items: center;
    justify-content: center;
}
.tab {
    width: 238px;
    padding: 0 13px 2px 9px;
    display: flex;
    align-items: center;
}
.tab-active {
    width: 240px;
    margin-left: 2px;
    padding: 0 10px 2px 12px;
    background-color: #f7f7f7;
    border-radius: 8px 8px 0 0;
}
.tab-title {
    flex: 1;
    margin-left: 10px;
    white-space: nowrap;
}
.tab-fade {
    font-size: 11.6px;
    -webkit-mask-image: linear-gradient(to right, #000 90%, transparent 100%);
    mask-image: linear-gradient(to right, #000 90%, transparent 100%);
}
.tab-close {
    flex: none;
    color: #222;
}
.strip-add {
    width: 36px;
    margin: 4px 0 6px;
    display: flex;
    align-items: center;
    justify-content: center;
    border-left: 1px solid #8f8f8f;
}
.window-controls {
    display: flex;
    margin-left: auto;
}
.win-btn {
    width: 46px;
    padding-bottom: 1px;
    display: flex;
    align-items: center;
    justify-content: center;
}

/* browser toolbar */
.toolbar {
    height: 38px;
    flex: none;
    display: flex;
    align-items: center;
    padding: 4px 0 4px 6px;
}
.tool-btn {
    width: 44px;
    flex: none;
    display: flex;
    align-items: center;
    justify-content: center;
}
.urlbox {
    width: 772px;
    height: 30px;
    margin-left: 6px;
    padding: 0 5px 0 19px;
    flex: none;
    display: flex;
    align-items: center;
    background-color: #fff;
    border-radius: 15px;
    box-shadow: 0 0 2px rgba(0,0,0,0.08);
}
.url {
    flex: 1;
    margin-left: 16px;
    font-size: 13px;
    color: #333;
}
.url-dim {
    color: #777;
}
.url-btn {
    width: 40px;
    display: flex;
    justify-content: center;
}
.tool-gap {
    margin-left: 6px;
}
.tool-sep {
    width: 1px;
    height: 20px;
    margin: 0 2px 0 1px;
    background-color: #ccc;
}
.signin {
    width: 87px;
    height: 30px;
    margin-left: 3px;
    padding: 0 3px 0 14px;
    flex: none;
    display: flex;
    align-items: center;
    justify-content: space-between;
    border: 1px solid #9c3a3a;
    border-radius: 15px;
    color: #a33a3a;
    font-size: 12px;
}
.tool-more {
    margin-left: 2px;
}
.tool-bing {
    width: 40px;
    display: flex;
    justify-content: center;
}

/* page area */
.content {
    height: 610px;
    flex: none;
    display: flex;
}
.app {
    position: relative;
    width: 1232px;
    height: 607px;
    margin-left: 4px;
    flex: none;
    display: flex;
    flex-direction: column;
    overflow: hidden;
    border-radius: 8px;
    background-color: #3d3d3d;
    color: #e4e4e4;
    font-family: Roboto, sans-serif;
    font-size: 8.2px;
}
.appbar {
    height: 42px;
    flex: none;
    display: flex;
    align-items: center;
    padding: 0 21px 0 16px;
    background-color: #3c3c3c;
    border-bottom: 1px solid #2c2c2c;
}
.menu-icon {
    margin-right: 8px;
}
.brand {
    margin-left: 4px;
    font-family: Inter, sans-serif;
    font-size: 13px;
    font-weight: 800;
    color: #f2f2f2;
}
.appbar-right {
    margin-left: auto;
    display: flex;
    align-items: center;
}
.bar-icon {
    margin-right: 16px;
}
.account {
    position: relative;
    display: flex;
    margin-right: 6px;
    margin-left: -4px;
}
.online-dot {
    position: absolute;
    top: -3px;
    right: -3px;
    width: 6px;
    height: 6px;
    border-radius: 50%;
    background-color: #4caf50;
}
.center-name {
    font-size: 8.5px;
    font-weight: 500;
}
.app-body {
    flex: 1;
    min-height: 0;
    display: flex;
}
.sidenav {
    width: 32px;
    flex: none;
    padding: 6.5px 0 6px;
    display: flex;
    flex-direction: column;
    justify-content: space-between;
    background-color: #3d3d3d;
    border-right: 1px solid #525252;
}
.nav-item {
    height: 29.7px;
    padding-left: 2px;
    display: flex;
    align-items: center;
    justify-content: center;
}
.nav-active {
    background-color: #5a5a5a;
}
.main {
    flex: 1;
    min-width: 0;
    display: flex;
    flex-direction: column;
}

/* date range filters */
.filterbar {
    height: 53px;
    flex: none;
    padding: 4px 0 0 5px;
    background-color: #333;
}
.filter-title {
    font-size: 9.3px;
    line-height: 11px;
    color: #bdbdbd;
}
.filter-row {
    display: flex;
    align-items: flex-start;
    margin-top: 11px;
    font-size: 9.5px;
}
.date-field {
    width: 160px;
    height: 25px;
    margin-right: 11px;
    padding: 0 17px 0 8px;
    display: flex;
    align-items: center;
    justify-content: space-between;
    border: 1px solid #4e4e4e;
    border-radius: 4px;
    color: #aaa;
}
.select-field {
    position: relative;
    width: 125px;
    height: 25px;
    margin-left: -1px;
    padding-left: 8px;
    display: flex;
    align-items: center;
    border: 1px solid #626262;
    border-radius: 4px;
    color: #ddd;
    font-size: 9px;
}
.select-legend {
    position: absolute;
    top: -4px;
    left: 6px;
    padding: 0 3px;
    background-color: #333;
    color: #aaa;
    font-size: 6px;
    line-height: 7px;
}
.excel-btn {
    width: 81px;
    height: 22px;
    margin-left: 10px;
    padding: 0;
    border: none;
    border-radius: 3px;
    background-color: #2196f3;
    color: #e8f4ff;
    font-family: Roboto, sans-serif;
    font-size: 7.5px;
    font-weight: 700;
    box-shadow: 0 1px 2px rgba(0,0,0,0.3);
}

/* study table */
.table-wrap {
    flex: 1;
    min-height: 0;
    display: flex;
}
.table {
    flex: 1;
    min-width: 0;
    overflow: hidden;
}
.thead, .row {
    display: grid;
    grid-template-columns: 100px 113px 88px 119px 90px 99px 103px 70px 115px 117px 120px 1fr;
    padding-left: 10px;
}
.thead {
    height: 55px;
    background-color: #000;
}
.th {
    padding-top: 5px;
}
.th-label {
    display: flex;
    align-items: center;
    gap: 3px;
    height: 11px;
    color: #e8e8e8;
    font-weight: 500;
}
.th-input {
    height: 24px;
    margin-top: 8px;
    border: 1px solid #262626;
    border-radius: 3px;
}
.w56 { width: 56px; }
.w58 { width: 58px; }
.w73 { width: 73px; }
.w77 { width: 77px; }
.w87 { width: 87px; }
.w89 { width: 89px; }
.w91 { width: 91px; }
.w93 { width: 93px; }
.th-date {
    display: flex;
    align-items: center;
    justify-content: flex-end;
    padding-right: 17px;
}
.th-focus {
    border-color: #ddd;
    padding-right: 11px;
}
.icon-halo {
    width: 28px;
    height: 28px;
    display: flex;
    align-items: center;
    justify-content: center;
    border-radius: 50%;
    background-color: #1e1e1e;
}
.icon-halo svg {
    flex: none;
}
.row {
    padding-top: 3.75px;
    padding-bottom: 2.75px;
    border-bottom: 1px solid #525252;
    line-height: 11.5px;
    background-color: #2e2e2e;
}
.row:nth-child(even) {
    background-color: #434343;
}
.row-flag, .row-flag:nth-child(even) {
    background-color: #c2105f;
    border-bottom-color: #c2105f;
    color: #f8c6dd;
}
.cell {
    display: flex;
    flex-direction: column;
    justify-content: center;
}
.cell-id {
    flex-direction: row;
    align-items: center;
    justify-content: flex-start;
    gap: 3px;
}
.cell-id svg {
    fill: #f0f0f0;
}
.cell-patient {
    padding-right: 24px;
}
.cell-study {
    padding-right: 24px;
}
.cell-history {
    padding-right: 25px;
}
.sub {
    font-size: 7.5px;
    line-height: 12.5px;
    color: #a9a9a9;
    letter-spacing: 0.2px;
}
.row-flag .sub {
    color: #ec9cc2;
}
.tags {
    line-height: 12.5px;
    color: #2f7fbf;
}
.cell-share {
    flex-direction: row;
    align-items: center;
    justify-content: flex-start;
    gap: 7px;
    padding-left: 3px;
    fill: #2f86c9;
}
.row-flag .cell-share {
    fill: #a463c4;
}
.cell-report {
    color: #a01848;
}

/* scrollbar */
.scrollbar {
    width: 15px;
    flex: none;
    display: flex;
    flex-direction: column;
    align-items: center;
    background-color: #fff;
}
.scroll-up, .scroll-down {
    width: 0;
    height: 0;
    border-left: 4px solid transparent;
    border-right: 4px solid transparent;
}
.scroll-up {
    margin-top: 9px;
    border-bottom: 5px solid #8b8b8b;
}
.scroll-down {
    margin-top: auto;
    margin-bottom: 7px;
    border-top: 5px solid #8b8b8b;
}
.scroll-thumb {
    width: 9px;
    height: 217px;
    margin-top: 9px;
    border-radius: 5px;
    background-color: #8b8b8b;
}

/* rows-per-page footer */
.pager {
    height: 36px;
    flex: none;
    display: flex;
    align-items: center;
    padding: 0 0 1px 5px;
    background-color: #3f3f3f;
    color: #d6d6d6;
}
.sweep {
    margin-left: 1px;
}
.pager-label {
    margin-left: 951px;
}
.pager-size {
    margin-left: 12px;
}
.pager-caret {
    width: 0;
    height: 0;
    margin-left: 6px;
    border-left: 3px solid transparent;
    border-right: 3px solid transparent;
    border-top: 3px solid #ddd;
}
.pager-range {
    margin-left: 25px;
    font-size: 8.8px;
}
.pager-prev {
    margin-left: 19px;
}
.pager-next {
    margin-left: 22px;
}

.hand-cursor {
    position: absolute;
    left: 883px;
    top: 136px;
}

/* edge sidebar */
.edge-rail {
    flex: 1;
    display: flex;
    flex-direction: column;
    justify-content: space-between;
    padding: 1px 0 2px;
    background-color: #f6f6f6;
    border-left: 1px solid #e6e6e6;
}
.rail-item {
    height: 40px;
    display: flex;
    align-items: center;
    justify-content: center;
}
.rail-plus {
    margin-top: 4px;
}
.rail-sep {
    width: 28px;
    height: 1px;
    margin: 0 auto 3px;
    background-color: #ccc;
}

/* windows taskbar */
.taskbar {
    height: 40px;
    flex: none;
    display: flex;
    align-items: center;
    background: linear-gradient(to right, #cfdfe9 0%, #ebdfdc 35%, #eee0dd 70%, #d6e6ec 90%, #cfe3e8 100%);
    color: #222;
}
.task-start {
    width: 49px;
    display: flex;
    justify-content: center;
}
.task-search {
    width: 342px;
    height: 40px;
    padding-left: 11px;
    flex: none;
    display: flex;
    align-items: center;
    gap: 9px;
    background-color: #fff;
    border: 1px solid #d8d8d8;
    border-bottom: none;
    font-size: 14.3px;
    color: #333;
}
.task-item {
    width: 50px;
    height: 40px;
    flex: none;
    display: flex;
    align-items: center;
    justify-content: center;
}
.task-view {
    padding-right: 3px;
}
.task-open {
    box-shadow: inset 0 -2px 0 #1c6fb8;
}
.task-focus {
    background-color: rgba(255,255,255,0.5);
}
.chrome-logo {
    position: relative;
    width: 24px;
    height: 24px;
    display: flex;
    align-items: center;
    justify-content: center;
    border-radius: 50%;
    background: conic-gradient(#ea4335 0 120deg, #fbbc05 120deg 150deg, #34a853 150deg 300deg, #ea4335 300deg);
}
.chrome-core {
    width: 11px;
    height: 11px;
    border-radius: 50%;
    background-color: #4285f4;
    border: 2px solid #fff;
}
.chrome-badge {
    position: absolute;
    right: -3px;
    bottom: -2px;
    width: 15px;
    height: 15px;
    border-radius: 50%;
    background-color: #e07a1f;
    color: #fff;
    font-family: Roboto, sans-serif;
    font-size: 8px;
    font-weight: 700;
    line-height: 15px;
    text-align: center;
}
.tray {
    margin-left: auto;
    display: flex;
    align-items: center;
}
.tray-result {
    width: 84px;
    padding-left: 3px;
    display: flex;
    align-items: center;
    gap: 8px;
    font-size: 13.5px;
}
.tray-icon {
    width: 24px;
    display: flex;
    justify-content: center;
}
.tray-keys {
    width: 32px;
}
.tray-lang {
    width: 36px;
    text-align: center;
    font-size: 12px;
}
.tray-clock {
    width: 62px;
    margin-left: 8px;
    display: flex;
    flex-direction: column;
    align-items: center;
    white-space: nowrap;
    font-size: 11.5px;
    line-height: 17px;
}
.tray-notify {
    position: relative;
    width: 60px;
    padding-left: 18px;
    display: flex;
}
.notify-count {
    position: absolute;
    left: 30px;
    top: 6px;
    width: 14px;
    height: 14px;
    border: 1px solid #444;
    border-radius: 50%;
    background-color: #ddd;
    font-size: 9px;
    line-height: 13px;
    text-align: center;
}
```
